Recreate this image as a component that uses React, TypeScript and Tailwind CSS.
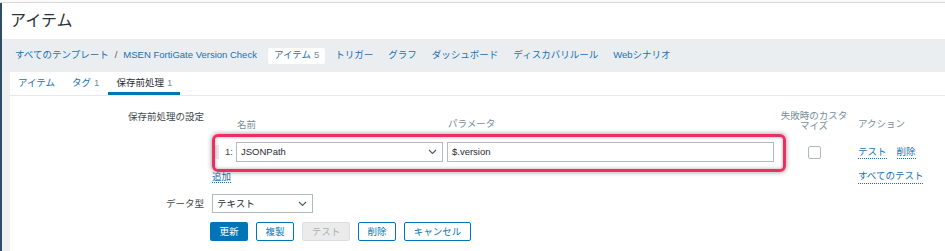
import React from "react";

const NAV_ITEMS = ["トリガー", "グラフ", "ダッシュボード", "ディスカバリルール", "Webシナリオ"];

function Chevron() {
  return (
    <svg width="9" height="6" viewBox="0 0 9 6" className="shrink-0">
      <polyline points="1,1 4.5,4.5 8,1" fill="none" stroke="#4f5a60" strokeWidth="1.1" />
    </svg>
  );
}

function ActionLink({ children }: { children: React.ReactNode }) {
  return (
    <span className="text-[#1a6fb0] leading-[12px] border-b border-dotted border-[#1a6fb0]">
      {children}
    </span>
  );
}

export default function App() {
  return (
    <div
      className="relative w-[945px] h-[251px] overflow-hidden bg-white text-[9.5px] text-[#1f2c33]"
      style={{ fontFamily: '"Liberation Sans", "Noto Sans CJK JP", sans-serif' }}
    >
      {/* top edge */}
      <div className="h-[3px] bg-[#fafafa] border-b border-[#d6d9db]" />

      <div className="flex h-[248px]">
        {/* sidebar edge */}
        <div className="w-[2px] bg-[#2d4c68]" />

        <div className="flex-1 flex flex-col">
          {/* page title */}
          <div className="h-[36px] pl-[8px] flex items-center">
            <h1 className="text-[16px] leading-[20px] font-normal text-[#2a3439]">アイテム</h1>
          </div>

          {/* breadcrumb nav */}
          <div className="h-[33px] bg-[#ebeef0] flex items-center pl-[13px]">
            <span className="text-[#1a6fb0]">すべてのテンプレート</span>
            <span className="mx-[6px] text-[#4f5a60]">/</span>
            <span className="text-[#1a6fb0]">MSEN FortiGate Version Check</span>
            <span className="ml-[11px] h-[16px] px-[6px] flex items-center bg-white rounded-[2px]">
              <span className="text-[#1a6fb0]">アイテム</span>
              <span className="ml-[3px] text-[#768d99]">5</span>
            </span>
            <div className="flex ml-[4px] gap-[3px]">
              {NAV_ITEMS.map((item) => (
                <span key={item} className="px-[6px] text-[#1a6fb0]">
                  {item}
                </span>
              ))}
            </div>
          </div>

          <div className="flex flex-1">
            <div className="w-[8px] bg-[#efefef]" />

            <div className="flex-1 flex flex-col bg-white">
              {/* tabs */}
              <div className="h-[24px] flex border-b border-[#e6e8ea]">
                <div className="px-[8px] flex items-center text-[#1a6fb0]">アイテム</div>
                <div className="ml-[1px] px-[8px] flex items-center">
                  <span className="text-[#1a6fb0]">タグ</span>
                  <span className="ml-[3px] text-[#768d99]">1</span>
                </div>
                <div className="ml-[1px] px-[8px] flex items-center border-b-[3px] border-[#0275b8] pt-[3px]">
                  <span>保存前処理</span>
                  <span className="ml-[3px] text-[#768d99]">1</span>
                </div>
              </div>

              {/* form */}
              <div className="flex flex-col pt-[15px]">
                <div className="flex">
                  <div className="w-[194px] text-right leading-[12px] text-[#3d474c]">保存前処理の設定</div>
                  <div className="ml-[8px] flex flex-col">
                    {/* header row */}
                    <div className="flex h-[20px] items-end text-[#768d99]">
                      <div className="w-[24px]" />
                      <div className="w-[207px] pl-[1px] leading-[12px]">名前</div>
                      <div className="w-[4px]" />
                      <div className="w-[327px] pl-[1px] leading-[12px] mb-[1px]">パラメータ</div>
                      <div className="w-[80px] text-center leading-[10px]">
                        失敗時のカスタ
                        <br />
                        マイズ
                      </div>
                      <div className="ml-[4px] leading-[12px] mb-[1px]">アクション</div>
                    </div>

                    {/* step row */}
                    <div className="flex items-center h-[20px] mt-[11px]">
                      <div className="w-[24px] flex items-center">
                        <div className="ml-[3px] w-[4px] h-[14px] bg-[radial-gradient(#cdd1d3_0.6px,transparent_0.8px)] bg-[length:2px_2px]" />
                        <span className="ml-[6px] text-[#3d474c]">1:</span>
                      </div>
                      <div className="w-[207px] h-[20px] border border-[#b3babe] flex items-center justify-between pl-[4px] pr-[5px]">
                        <span>JSONPath</span>
                        <Chevron />
                      </div>
                      <div className="ml-[4px] w-[327px] h-[20px] border border-[#b3babe] flex items-center pl-[4px]">
                        $.version
                      </div>
                      <div className="w-[80px] flex justify-center">
                        <div className="w-[13px] h-[13px] border border-[#b3babe] rounded-[2px] bg-white" />
                      </div>
                      <div className="ml-[4px] flex gap-[10px]">
                        <ActionLink>テスト</ActionLink>
                        <ActionLink>削除</ActionLink>
                      </div>
                    </div>

                    {/* add row */}
                    <div className="flex mt-[8px]">
                      <div className="w-[646px]">
                        <ActionLink>追加</ActionLink>
                      </div>
                      <ActionLink>すべてのテスト</ActionLink>
                    </div>
                  </div>
                </div>

                {/* data type */}
                <div className="flex items-center mt-[10px]">
                  <div className="w-[194px] text-right text-[#3d474c]">データ型</div>
                  <div className="ml-[8px] w-[101px] h-[19px] border border-[#b3babe] flex items-center justify-between pl-[4px] pr-[5px]">
                    <span>テキスト</span>
                    <Chevron />
                  </div>
                </div>

                {/* buttons */}
                <div className="flex mt-[9px] ml-[200px] gap-[8px]">
                  <div className="w-[38px] h-[19px] flex items-center justify-center rounded-[2px] bg-[#0275b8] text-white">更新</div>
                  <div className="w-[38px] h-[19px] flex items-center justify-center rounded-[2px] border border-[#0275b8] text-[#0275b8]">複製</div>
                  <div className="w-[48px] h-[19px] flex items-center justify-center rounded-[2px] border border-[#dcdfe1] bg-[#ebebeb] text-[#a9b1b5]">テスト</div>
                  <div className="w-[38px] h-[19px] flex items-center justify-center rounded-[2px] border border-[#0275b8] text-[#0275b8]">削除</div>
                  <div className="w-[67px] h-[19px] flex items-center justify-center rounded-[2px] border border-[#0275b8] text-[#0275b8]">キャンセル</div>
                </div>
              </div>
            </div>
          </div>
        </div>
      </div>

      {/* highlight annotation over the step row */}
      <div className="pointer-events-none absolute left-[212px] top-[134px] w-[574px] h-[38px] rounded-[6px] border-[3px] border-[#ee2d62] shadow-[0_0_4px_1px_rgba(0,0,0,0.3),inset_0_0_3px_1px_rgba(0,0,0,0.2)]" />
    </div>
  );
}
